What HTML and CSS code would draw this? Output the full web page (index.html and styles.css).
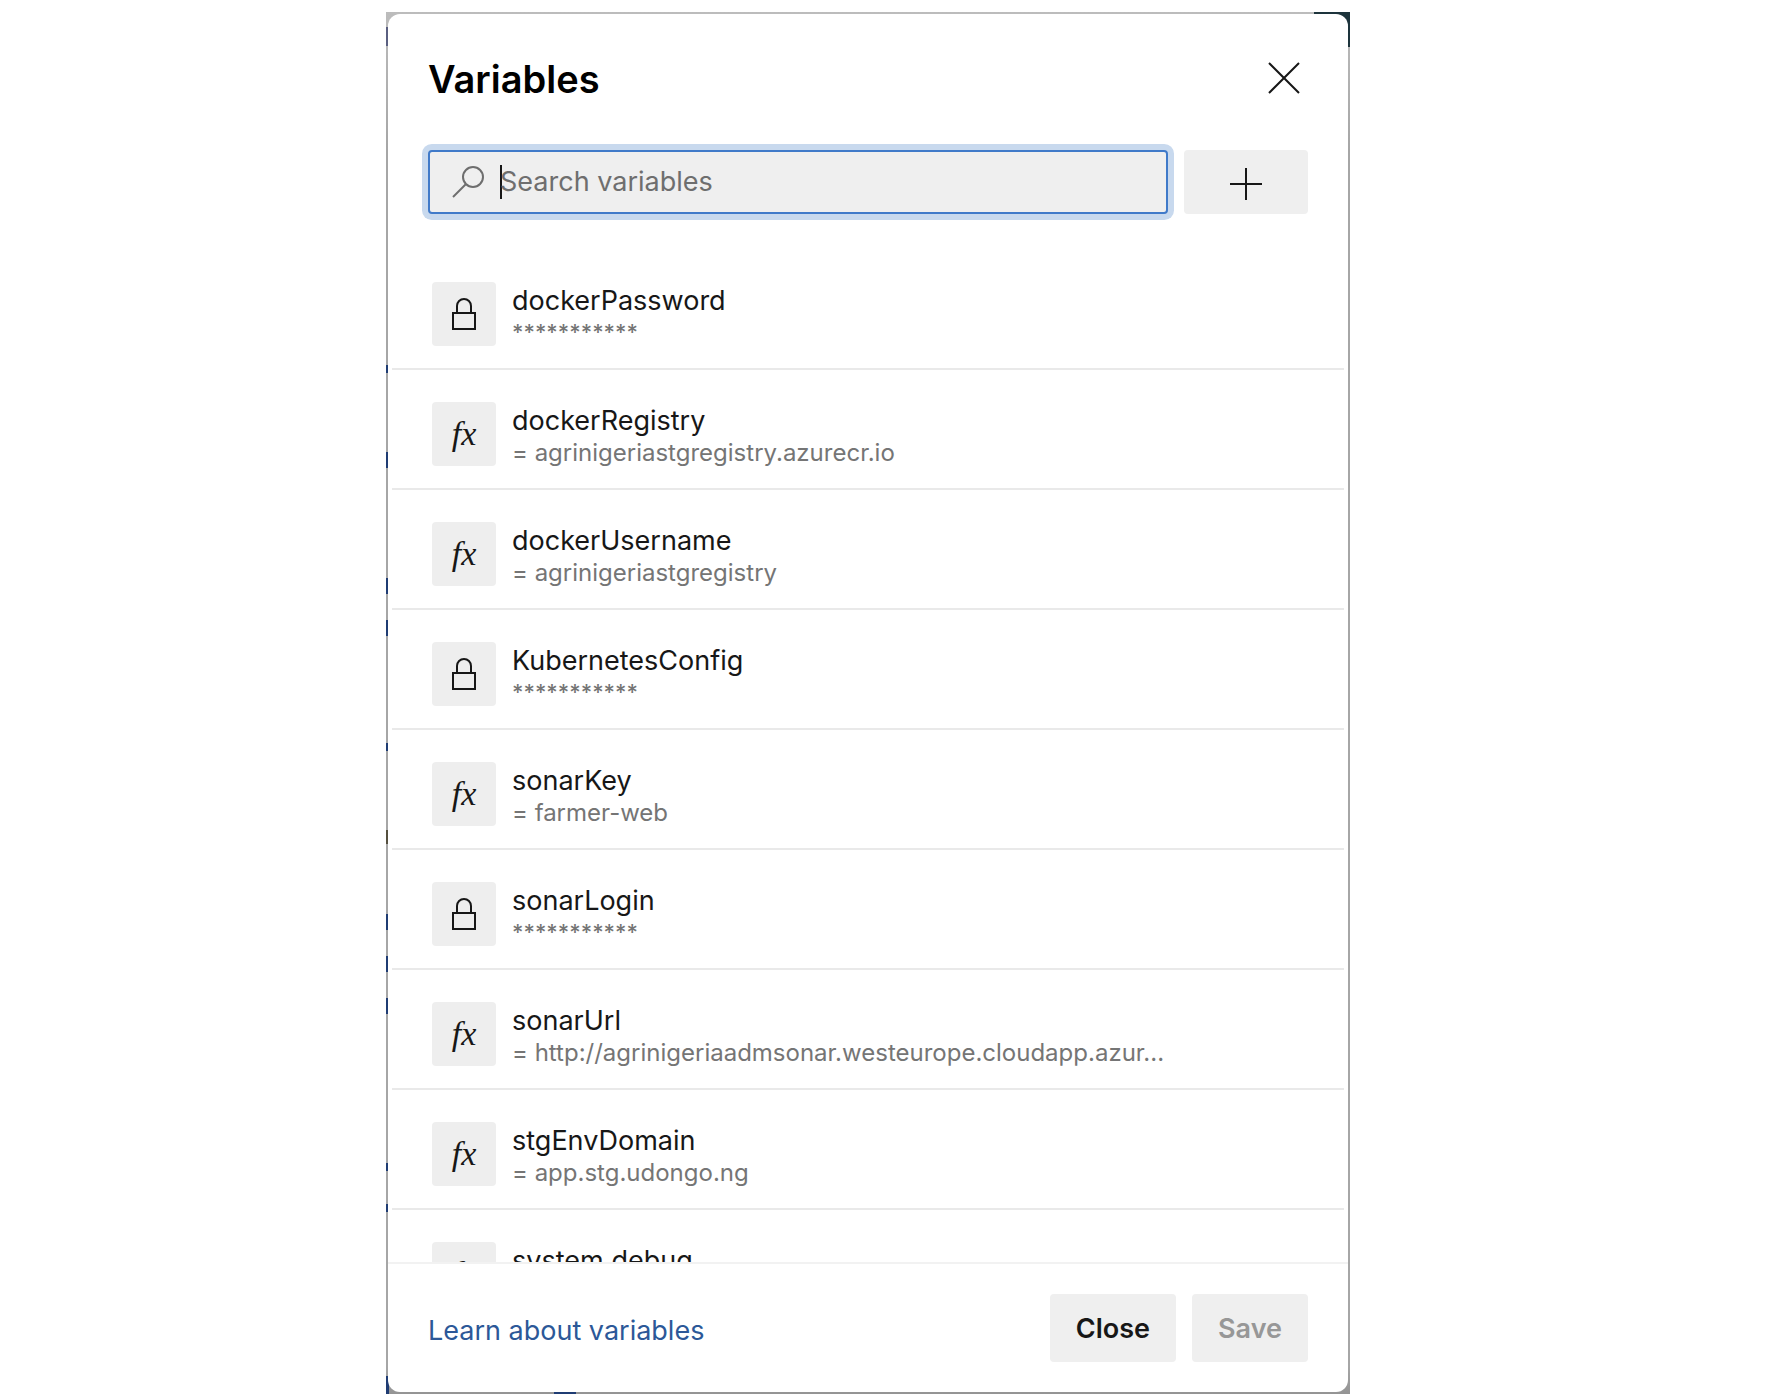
FILE: index.html
```
<!DOCTYPE html>
<html lang="en">
<head>
    <meta charset="UTF-8">
    <meta name="viewport" content="width=device-width, initial-scale=1.0">
    <title>Variables</title>
    <link rel="stylesheet" href="styles.css">
</head>
<body>
    <svg class="sprite" aria-hidden="true">
        <symbol id="lock" viewBox="0 0 32 32">
            <rect x="5" y="15" width="22" height="16"/>
            <path d="M9 15V8a7 7 0 0 1 14 0v7"/>
        </symbol>
    </svg>
    <div class="backdrop">
        <main class="dialog" role="dialog" aria-labelledby="title">
            <header class="dialog-header">
                <h1 id="title">Variables</h1>
                <button class="icon-button" type="button" aria-label="Dismiss">
                    <svg class="icon" viewBox="0 0 32 32"><path d="M1 1l30 30M31 1L1 31"/></svg>
                </button>
            </header>
            <div class="toolbar">
                <label class="search">
                    <svg class="icon" viewBox="0 0 32 32"><circle cx="21" cy="11" r="10"/><path d="M14 18L1 31"/></svg>
                    <span class="caret"></span>
                    <input type="text" placeholder="Search variables" aria-label="Search variables">
                </label>
                <button class="button add" type="button" aria-label="Add variable">
                    <svg class="icon" viewBox="0 0 32 32"><path d="M16 0v32M0 16h32"/></svg>
                </button>
            </div>
            <ul class="variables">
                <li class="variable">
                    <span class="badge"><svg class="icon"><use href="#lock"/></svg></span>
                    <div class="details">
                        <p class="name">dockerPassword</p>
                        <p class="secret">***********</p>
                    </div>
                </li>
                <li class="variable">
                    <span class="badge">fx</span>
                    <div class="details">
                        <p class="name">dockerRegistry</p>
                        <p class="value">= agrinigeriastgregistry.azurecr.io</p>
                    </div>
                </li>
                <li class="variable">
                    <span class="badge">fx</span>
                    <div class="details">
                        <p class="name">dockerUsername</p>
                        <p class="value">= agrinigeriastgregistry</p>
                    </div>
                </li>
                <li class="variable">
                    <span class="badge"><svg class="icon"><use href="#lock"/></svg></span>
                    <div class="details">
                        <p class="name">KubernetesConfig</p>
                        <p class="secret">***********</p>
                    </div>
                </li>
                <li class="variable">
                    <span class="badge">fx</span>
                    <div class="details">
                        <p class="name">sonarKey</p>
                        <p class="value">= farmer-web</p>
                    </div>
                </li>
                <li class="variable">
                    <span class="badge"><svg class="icon"><use href="#lock"/></svg></span>
                    <div class="details">
                        <p class="name">sonarLogin</p>
                        <p class="secret">***********</p>
                    </div>
                </li>
                <li class="variable">
                    <span class="badge">fx</span>
                    <div class="details">
                        <p class="name">sonarUrl</p>
                        <p class="value">= http://agrinigeriaadmsonar.westeurope.cloudapp.azur...</p>
                    </div>
                </li>
                <li class="variable">
                    <span class="badge">fx</span>
                    <div class="details">
                        <p class="name">stgEnvDomain</p>
                        <p class="value">= app.stg.udongo.ng</p>
                    </div>
                </li>
                <li class="variable">
                    <span class="badge">fx</span>
                    <div class="details">
                        <p class="name">system.debug</p>
                    </div>
                </li>
            </ul>
            <footer class="dialog-footer">
                <a href="#">Learn about variables</a>
                <button class="button" type="button">Close</button>
                <button class="button" type="button" disabled>Save</button>
            </footer>
        </main>
    </div>
</body>
</html>
```
FILE: styles.css
```
* {
    box-sizing: border-box;
}
body {
    font-family: Inter, "Liberation Sans", sans-serif;
    font-size: 27px;
    line-height: 32px;
    color: #171717;
    background: #fff;
    margin: 0;
    height: 100vh;
    padding: 12px 442px 2px 386px;
}
h1, p, ul {
    margin: 0;
    padding: 0;
}
button, input {
    font: inherit;
    color: inherit;
    border: none;
    padding: 0;
}
.sprite {
    display: none;
}
.icon {
    width: 32px;
    height: 32px;
    flex-shrink: 0;
    fill: none;
    stroke: currentColor;
    stroke-width: 2px;
}

/* dimmed page showing round the dialog edge */
.backdrop {
    height: 100%;
    padding: 2px;
    background:
        linear-gradient(#1d343c, #1d343c) right top / 36px 35px,
        linear-gradient(#5a5f80, #5a5f80) 0 15px / 2px 19px,
        linear-gradient(#1f3c73, #1f3c73) 0 353px / 2px 8px,
        linear-gradient(#1f3c73, #1f3c73) 0 440px / 2px 16px,
        linear-gradient(#1f3c73, #1f3c73) 0 566px / 2px 16px,
        linear-gradient(#1f3c73, #1f3c73) 0 608px / 2px 16px,
        linear-gradient(#1f3c73, #1f3c73) 0 731px / 2px 8px,
        linear-gradient(#55503f, #55503f) 0 818px / 2px 14px,
        linear-gradient(#1f3c73, #1f3c73) 0 902px / 2px 16px,
        linear-gradient(#1f3c73, #1f3c73) 0 944px / 2px 16px,
        linear-gradient(#1f3c73, #1f3c73) 0 986px / 2px 16px,
        linear-gradient(#1f3c73, #1f3c73) 0 1151px / 2px 8px,
        linear-gradient(#1f3c73, #1f3c73) 0 1192px / 2px 8px,
        linear-gradient(#1f3c73, #1f3c73) 0 bottom / 3px 18px,
        linear-gradient(#1f3c73, #1f3c73) 168px bottom / 22px 2px,
        linear-gradient(#bcbcbc, #a6a6a6 10%, #a6a6a6 98%, #949494);
    background-repeat: no-repeat;
}
.dialog {
    height: 100%;
    display: flex;
    flex-direction: column;
    background: #fff;
    border-radius: 12px;
    overflow: hidden;
}
.dialog-header {
    display: flex;
    align-items: center;
    justify-content: space-between;
    padding: 40px 48px 48px 40px;
}
.dialog-header h1 {
    padding-top: 2px;
    font-size: 38px;
    line-height: 46px;
    font-weight: 600;
    color: #000;
}
.icon-button {
    display: flex;
    background: none;
    cursor: pointer;
}
.toolbar {
    display: flex;
    gap: 16px;
    padding: 0 40px 36px;
}
.search {
    flex: 1;
    display: flex;
    align-items: center;
    height: 64px;
    padding: 0 22px;
    border: 2px solid #407ac9;
    border-radius: 4px;
    box-shadow: 0 0 0 6px #c8d9ee;
    background: #efefef;
    color: #6e6e6e;
}
.caret {
    width: 2px;
    height: 34px;
    margin: 0 -2px 0 16px;
    background: #171717;
}
.search input {
    flex: 1;
    min-width: 0;
    background: none;
    outline: none;
}
.search input::placeholder {
    color: #6e6e6e;
    opacity: 1;
}
.button {
    height: 68px;
    padding: 2px 26px 0;
    border-radius: 4px;
    background: #efefef;
    font-weight: 600;
    cursor: pointer;
}
.button:disabled {
    color: #979797;
}
.add {
    display: flex;
    align-items: center;
    justify-content: center;
    width: 124px;
    height: 64px;
    padding-top: 4px;
}
.variables {
    flex: 1;
    min-height: 0;
    overflow: hidden;
    list-style: none;
    padding: 0 4px;
}
.variable {
    display: flex;
    gap: 16px;
    height: 120px;
    padding: 32px 36px 22px 40px;
    border-bottom: 2px solid #e9e9e9;
}
.badge {
    display: flex;
    align-items: center;
    justify-content: center;
    flex-shrink: 0;
    width: 64px;
    height: 64px;
    border-radius: 4px;
    background: #eee;
    font-family: "Liberation Serif", serif;
    font-style: italic;
    font-size: 34px;
}
.details {
    min-width: 0;
    white-space: nowrap;
}
.name {
    padding-top: 3px;
}
.value, .secret {
    font-size: 24px;
    color: #757575;
}
.secret {
    font-size: 22px;
    line-height: 30px;
    font-weight: 500;
}
.dialog-footer {
    display: flex;
    align-items: center;
    gap: 16px;
    padding: 30px 40px;
    border-top: 2px solid #f2f2f2;
}
.dialog-footer a {
    margin-right: auto;
    padding-top: 6px;
    color: #2c5898;
    text-decoration: none;
}
```
